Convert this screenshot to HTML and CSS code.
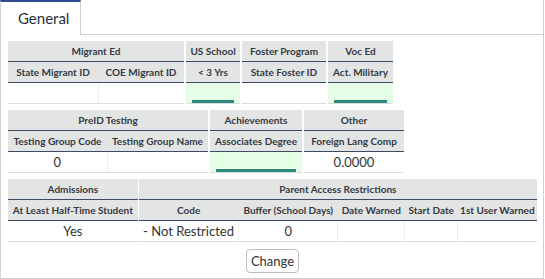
FILE: index.html
```html
<!DOCTYPE html>
<html lang="en">
<head>
  <meta charset="UTF-8">
  <title>General</title>
  <link rel="stylesheet" href="styles.css">
</head>
<body>
  <div class="tabs">
    <div class="tab active">General</div>
    <div class="tab-fill"></div>
  </div>

  <div class="panel">
    <!-- primeira linha -->
    <div class="group-row">
      <table class="grid w-migrant">
        <colgroup><col style="width:90px"><col></colgroup>
        <tr><th colspan="2">Migrant Ed</th></tr>
        <tr><th>State Migrant ID</th><th>COE Migrant ID</th></tr>
        <tr><td></td><td></td></tr>
      </table>
      <table class="grid w-school">
        <tr><th>US School</th></tr>
        <tr><th>&lt; 3 Yrs</th></tr>
        <tr><td class="field"><span></span></td></tr>
      </table>
      <table class="grid w-foster">
        <tr><th>Foster Program</th></tr>
        <tr><th>State Foster ID</th></tr>
        <tr><td></td></tr>
      </table>
      <table class="grid w-voc">
        <tr><th>Voc Ed</th></tr>
        <tr><th>Act. Military</th></tr>
        <tr><td class="field"><span></span></td></tr>
      </table>
    </div>

    <!-- segunda linha -->
    <div class="group-row">
      <table class="grid w-preid">
        <colgroup><col style="width:99px"><col></colgroup>
        <tr><th colspan="2">PreID Testing</th></tr>
        <tr><th>Testing Group Code</th><th>Testing Group Name</th></tr>
        <tr><td>0</td><td></td></tr>
      </table>
      <table class="grid w-achieve">
        <tr><th>Achievements</th></tr>
        <tr><th>Associates Degree</th></tr>
        <tr><td class="field"><span></span></td></tr>
      </table>
      <table class="grid w-other">
        <tr><th>Other</th></tr>
        <tr><th>Foreign Lang Comp</th></tr>
        <tr><td>0.0000</td></tr>
      </table>
    </div>

    <!-- terceira linha -->
    <div class="group-row tight">
      <table class="grid w-admit">
        <tr><th>Admissions</th></tr>
        <tr><th>At Least Half-Time Student</th></tr>
        <tr><td>Yes</td></tr>
      </table>
      <table class="grid w-parent">
        <colgroup>
          <col style="width:100px">
          <col style="width:99px">
          <col style="width:67px">
          <col style="width:53px">
          <col>
        </colgroup>
        <tr><th colspan="5">Parent Access Restrictions</th></tr>
        <tr>
          <th>Code</th>
          <th>Buffer (School Days)</th>
          <th>Date Warned</th>
          <th>Start Date</th>
          <th>1st User Warned</th>
        </tr>
        <tr><td>- Not Restricted</td><td>0</td><td></td><td></td><td></td></tr>
      </table>
    </div>

    <div class="actions">
      <button class="btn">Change</button>
    </div>
  </div>
</body>
</html>
```

FILE: styles.css
```css
body {
  margin: 0;
  padding: 0;
  background-color: #fff;
  font-family: Lato, "Open Sans", sans-serif;
  color: #333;
}

/* Abas */
.tabs {
  display: flex;
  width: 544px;
  height: 35px;
}

.tab {
  width: 81px;
  height: 35px;
  box-sizing: border-box;
  border-top: 2px solid #2b4b8c;
  border-left: 1px solid #d4d4d4;
  border-right: 1px solid #cfcfcf;
  font-size: 15px;
  line-height: 32px;
  padding-left: 17px;
  color: #2a2f3a;
}

.tab-fill {
  flex: 1;
  border-bottom: 1px solid #cfcfcf;
  border-right: 1px solid #cfcfcf;
}

.panel {
  width: 544px;
  box-sizing: border-box;
  border-left: 1px solid #d4d4d4;
  border-right: 1px solid #cfcfcf;
  border-bottom: 1px solid #cfcfcf;
  padding: 6px 6px 5px 7px;
}

.group-row {
  display: flex;
  gap: 2px;
  margin-bottom: 6px;
}

.group-row.tight {
  gap: 1px;
}

/* Tabelas */
.grid {
  border-collapse: collapse;
  table-layout: fixed;
}

.grid th {
  background-color: #e3e4e4;
  font-size: 10px;
  font-weight: 700;
  height: 20px;
  padding: 0 2px;
  white-space: nowrap;
  overflow: hidden;
  border-bottom: 1px solid #3c4a66;
  color: #343a44;
}

.grid td {
  height: 20px;
  padding: 0 2px;
  font-size: 13px;
  white-space: nowrap;
  text-align: center;
  border-bottom: 1px solid #dcdcdc;
  border-right: 1px solid #ececec;
}

.grid td:last-child {
  border-right: none;
}

.grid td.field {
  background-color: #e5fce5;
  padding: 0 6px;
  vertical-align: bottom;
}

.field span {
  display: block;
  height: 3px;
  background-color: #2e8b7c;
}

.w-migrant { width: 176px; }
.w-school { width: 54px; }
.w-foster { width: 84px; }
.w-voc { width: 65px; }
.w-preid { width: 200px; }
.w-achieve { width: 92px; }
.w-other { width: 100px; }
.w-admit { width: 130px; }
.w-parent { width: 399px; }

.actions {
  display: flex;
  justify-content: center;
  padding-top: 1px;
}

.btn {
  font-family: Lato, "Open Sans", sans-serif;
  font-size: 13px;
  color: #333;
  background-color: #fff;
  border: 1px solid #bdbdbd;
  border-radius: 4px;
  height: 24px;
  width: 53px;
  padding: 0;
}
```
